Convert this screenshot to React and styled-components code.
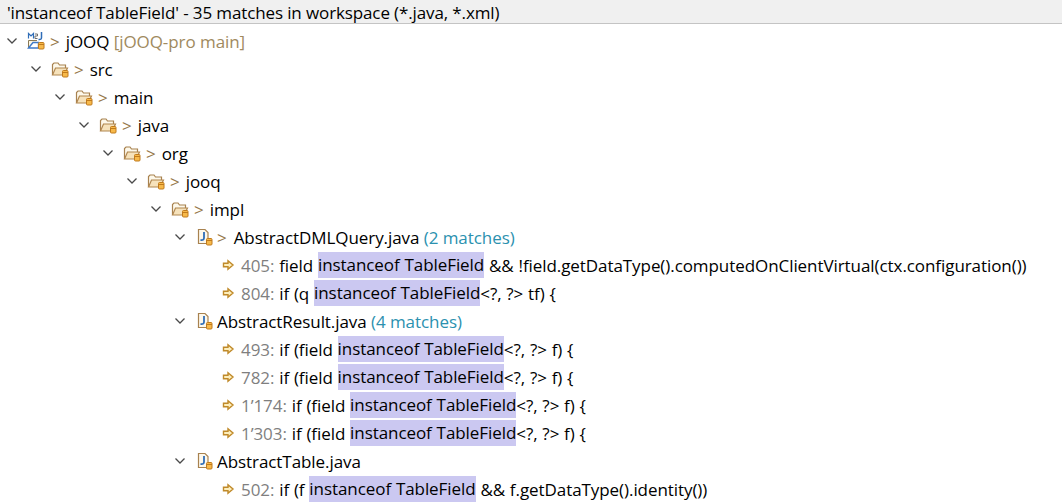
import React from "react"
import styled, { createGlobalStyle } from "styled-components"

const GlobalStyle = createGlobalStyle`
  html, body {
    margin: 0;
    padding: 0;
    background: #ffffff;
    overflow: hidden;
  }
`

const Page = styled.div`
  width: 1062px;
  height: 503px;
  overflow: hidden;
  font-family: "Open Sans", "Noto Sans", sans-serif;
  font-size: 17px;
  letter-spacing: -0.07px;
  color: #000;
  background: #fff;
`

const TitleBar = styled.div`
  height: 23px;
  line-height: 26px;
  padding-left: 7px;
  background: #f0f0f0;
  border-bottom: 1px solid #c4c4c4;
  white-space: pre;
  letter-spacing: -0.12px;
`

const Tree = styled.div`
  display: flex;
  flex-direction: column;
  padding-top: 3px;
`

const Row = styled.div`
  display: flex;
  align-items: center;
  height: 28px;
  padding-left: ${props => 5 + props.$depth * 24}px;
  white-space: pre;
`

const MatchRow = styled(Row)`
  word-spacing: 0.5px;
`

const ChevronSlot = styled.span`
  display: flex;
  width: 14px;
  margin-right: 8px;
`

const IconSlot = styled.span`
  display: flex;
  width: 19px;
  margin-right: ${props => (props.$file ? 3 : 4)}px;
`

const Decoration = styled.span`
  color: #96784a;
  margin-right: ${props => (props.$file ? 7 : 6)}px;
`

const Muted = styled.span`
  color: #a08a5e;
`

const Count = styled.span`
  color: #2b91af;
`

const LineNo = styled.span`
  color: #7f7f7f;
`

const Match = styled.span`
  background: #cbc8f1;
  line-height: 26px;
  height: 26px;
  display: inline-block;
`

const MatchArrow = styled.span`
  display: flex;
  margin-left: 49px;
  margin-right: 6px;
`

const Chevron = () => (
  <svg width="14" height="10" viewBox="0 0 14 10">
    <path d="M2.5 2.5 L7 7 L11.5 2.5" fill="none" stroke="#4a4a4a" strokeWidth="1.3" />
  </svg>
)

const Barrel = () => (
  <g>
    <rect x="11.5" y="10.5" width="5.5" height="6.5" rx="1" fill="#f7b94a" stroke="#c07a1c" />
    <path d="M11.5 12.5 H17" stroke="#c07a1c" />
  </g>
)

const Folder = () => (
  <svg width="19" height="18" viewBox="0 0 19 18">
    <path d="M1.5 15 V4.5 L3 3 H7 L8.5 5 H14.5 V8" fill="#fdf8ea" stroke="#a8824f" strokeWidth="1.2" />
    <path d="M1.5 15 L4.5 8 H16.5 L13 15 Z" fill="#f6e2bb" stroke="#b0864f" strokeWidth="1.2" />
    <Barrel />
  </svg>
)

const ProjectIcon = () => (
  <svg width="19" height="18" viewBox="0 0 19 18">
    <path d="M1.5 6.5 V1.5 L4 4 L6.5 1.5 V6.5" fill="none" stroke="#2f6db8" strokeWidth="1.2" />
    <path d="M8 2 H10.5 V4 H8 V6.5 H10.5" fill="none" stroke="#6f6f6f" />
    <path d="M14.5 0 V5.5 Q14.5 8 11.5 7.5" fill="none" stroke="#2f6db8" strokeWidth="1.5" />
    <path d="M1.5 16 V8.5 H10" fill="#fdf6e3" stroke="#8a7a55" />
    <path d="M1.5 16 L6 10.5 H11.5 V16 Z" fill="#ffffff" stroke="#3f7ac8" strokeWidth="1.4" />
    <Barrel />
  </svg>
)

const FileIcon = () => (
  <svg width="19" height="18" viewBox="0 0 19 18">
    <path d="M3.5 1.5 H10 L13 4.5 V15.5 H3.5 Z" fill="#fdf8ec" stroke="#a8824f" strokeWidth="1.2" />
    <path d="M9 4 V10 Q9 12.5 5.5 12" fill="none" stroke="#2f6db8" strokeWidth="1.8" />
    <Barrel />
  </svg>
)

const Arrow = () => (
  <svg width="13" height="12" viewBox="0 0 13 12">
    <path d="M1.5 4.2 H6 V1.8 L11 6 L6 10.2 V7.8 H1.5 Z" fill="#fdeebb" stroke="#c08a2a" strokeWidth="1.4" />
  </svg>
)

const folders = [
  { name: "src", depth: 1 },
  { name: "main", depth: 2 },
  { name: "java", depth: 3 },
  { name: "org", depth: 4 },
  { name: "jooq", depth: 5 },
  { name: "impl", depth: 6 },
]

const files = [
  {
    name: "AbstractDMLQuery.java",
    count: "(2 matches)",
    dirty: true,
    lines: [
      { no: "405", before: "field ", match: "instanceof TableField", after: " && !field.getDataType().computedOnClientVirtual(ctx.configuration())" },
      { no: "804", before: "if (q ", match: "instanceof TableField", after: "<?, ?> tf) {" },
    ],
  },
  {
    name: "AbstractResult.java",
    count: "(4 matches)",
    lines: [
      { no: "493", before: "if (field ", match: "instanceof TableField", after: "<?, ?> f) {" },
      { no: "782", before: "if (field ", match: "instanceof TableField", after: "<?, ?> f) {" },
      { no: "1’174", before: "if (field ", match: "instanceof TableField", after: "<?, ?> f) {" },
      { no: "1’303", before: "if (field ", match: "instanceof TableField", after: "<?, ?> f) {" },
    ],
  },
  {
    name: "AbstractTable.java",
    lines: [
      { no: "502", before: "if (f ", match: "instanceof TableField", after: " && f.getDataType().identity())" },
    ],
  },
]

export default function App() {
  return (
    <Page>
      <GlobalStyle />
      <TitleBar>'instanceof TableField' - 35 matches in workspace (*.java, *.xml)</TitleBar>
      <Tree>
        <Row $depth={0}>
          <ChevronSlot><Chevron /></ChevronSlot>
          <IconSlot><ProjectIcon /></IconSlot>
          <Decoration>&gt;</Decoration>
          jOOQ <Muted>[jOOQ-pro main]</Muted>
        </Row>
        {folders.map(folder => (
          <Row key={folder.name} $depth={folder.depth}>
            <ChevronSlot><Chevron /></ChevronSlot>
            <IconSlot><Folder /></IconSlot>
            <Decoration>&gt;</Decoration>
            {folder.name}
          </Row>
        ))}
        {files.map(file => (
          <React.Fragment key={file.name}>
            <Row $depth={7}>
              <ChevronSlot><Chevron /></ChevronSlot>
              <IconSlot $file><FileIcon /></IconSlot>
              {file.dirty && <Decoration $file>&gt;</Decoration>}
              {file.name}
              {file.count && <Count> {file.count}</Count>}
            </Row>
            {file.lines.map(line => (
              <MatchRow key={line.no} $depth={7}>
                <MatchArrow><Arrow /></MatchArrow>
                <LineNo>{line.no}: </LineNo>
                {line.before}
                <Match>{line.match}</Match>
                {line.after}
              </MatchRow>
            ))}
          </React.Fragment>
        ))}
      </Tree>
    </Page>
  )
}
